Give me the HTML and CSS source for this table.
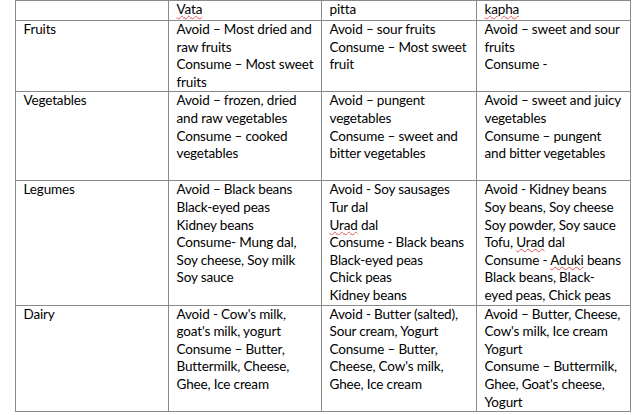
FILE: index.html
```html
<!DOCTYPE html>
<html>
<head>
<meta charset="utf-8">
<link rel="stylesheet" href="styles.css">
</head>
<body>
<table class="diet">
  <colgroup>
    <col class="c1"><col class="c2"><col class="c3"><col class="c4">
  </colgroup>
  <tr class="r-head">
    <td></td>
    <td><span class="sp">Vata</span></td>
    <td>pitta</td>
    <td><span class="sp">kapha</span></td>
  </tr>
  <tr class="r-fruits">
    <td>Fruits</td>
    <td>Avoid – Most dried and<br>raw fruits<br>Consume – Most sweet<br>fruits</td>
    <td>Avoid – sour fruits<br>Consume – Most sweet<br>fruit</td>
    <td>Avoid – sweet and sour<br>fruits<br>Consume -</td>
  </tr>
  <tr class="r-veg">
    <td>Vegetables</td>
    <td>Avoid – frozen, dried<br>and raw vegetables<br>Consume – cooked<br>vegetables</td>
    <td>Avoid – pungent<br>vegetables<br>Consume – sweet and<br>bitter vegetables</td>
    <td>Avoid – sweet and juicy<br>vegetables<br>Consume – pungent<br>and bitter vegetables</td>
  </tr>
  <tr class="r-leg">
    <td>Legumes</td>
    <td>Avoid – Black beans<br>Black-eyed peas<br>Kidney beans<br>Consume- Mung dal,<br>Soy cheese, Soy milk<br>Soy sauce</td>
    <td>Avoid - Soy sausages<br>Tur dal<br><span class="sp">Urad</span> dal<br>Consume - Black beans<br>Black-eyed peas<br>Chick peas<br>Kidney beans</td>
    <td>Avoid - Kidney beans<br>Soy beans, Soy cheese<br>Soy powder, Soy sauce<br>Tofu, <span class="sp">Urad</span> dal<br>Consume - <span class="sp">Aduki</span> beans<br>Black beans, Black-<br>eyed peas, Chick peas</td>
  </tr>
  <tr class="r-dairy">
    <td>Dairy</td>
    <td>Avoid - Cow's milk,<br>goat's milk, yogurt<br>Consume – Butter,<br>Buttermilk, Cheese,<br>Ghee, Ice cream</td>
    <td>Avoid - Butter (salted),<br>Sour cream, Yogurt<br>Consume – Butter,<br>Cheese, Cow's milk,<br>Ghee, Ice cream</td>
    <td>Avoid – Butter, Cheese,<br>Cow's milk, Ice cream<br>Yogurt<br>Consume – Buttermilk,<br>Ghee, Goat's cheese,<br>Yogurt</td>
  </tr>
</table>
</body>
</html>
```

FILE: styles.css
```css
html, body {
  margin: 0;
  padding: 0;
  background: #ffffff;
}
body {
  padding: 0 0 0 15px;
  font-family: Lato, "Liberation Sans", sans-serif;
  font-size: 13.5px;
  letter-spacing: -0.15px;
  line-height: 17.6px;
  color: #000000;
}
.diet {
  border-collapse: collapse;
  table-layout: fixed;
  width: 615px;
}
.c1 { width: 153px; }
.c2 { width: 153px; }
.c3 { width: 155px; }
.c4 { width: 154px; }
.diet td {
  border: 1px solid #8a8a8a;
  padding: 0 4px 0 7.5px;
  vertical-align: top;
  white-space: nowrap;
  overflow: hidden;
}
.r-head td { height: 19px; }
.r-fruits td { height: 69px; }
.r-veg td { height: 88px; }
.r-leg td { height: 123px; }
.r-dairy td { height: 105px; }
.sp {
  text-decoration: underline wavy #e25555;
  text-decoration-thickness: 1px;
  text-underline-offset: 0.5px;
}
```
